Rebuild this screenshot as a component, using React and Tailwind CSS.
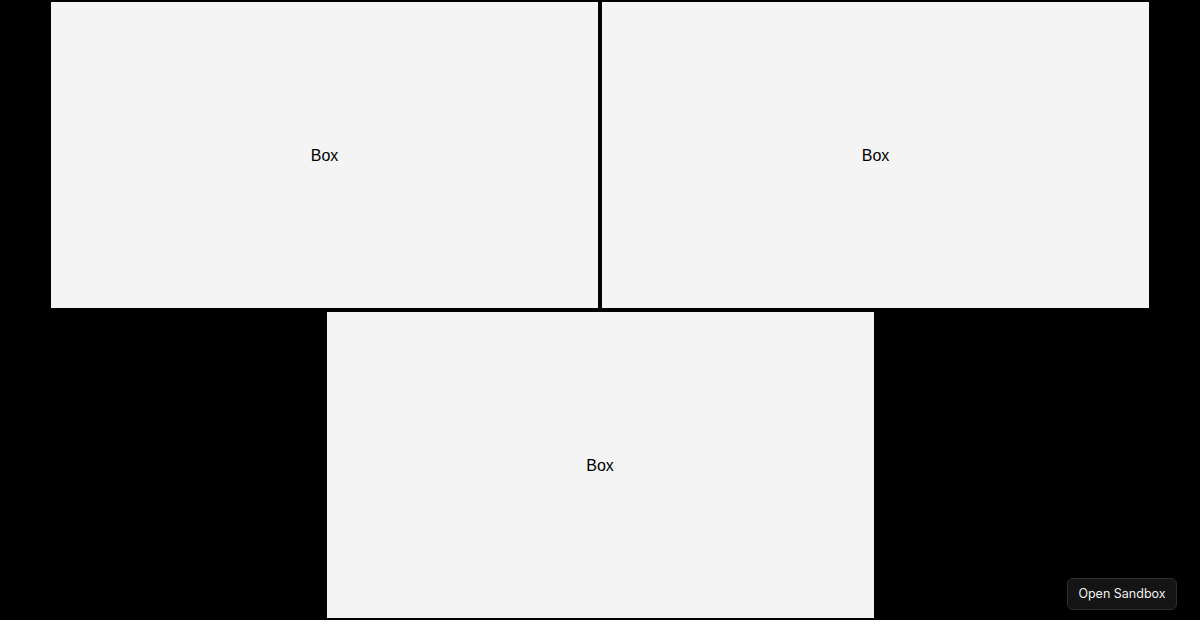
import React from "react";

const Box = () => (
  <div className="w-[547px] h-[306px] bg-[#f4f4f4] flex items-center justify-center pt-[2px] text-[16px] text-black">
    Box
  </div>
);

export default function App() {
  return (
    <div className="font-['Liberation_Sans',Arial,sans-serif]">
      <div className="bg-black h-[620px] py-[2px] flex justify-center">
        <div className="w-[1098px] flex flex-wrap justify-center gap-[4px] content-start">
          <Box />
          <Box />
          <Box />
        </div>
      </div>
      <div className="h-[10px] bg-white" />
      <button className="fixed right-[23px] bottom-[20px] h-[32px] w-[110px] pt-[1px] rounded-md bg-[#141414] border border-[#2f2f2f] text-[12.5px] text-[#f0f0f0] font-['Inter',sans-serif]">
        Open Sandbox
      </button>
    </div>
  );
}
